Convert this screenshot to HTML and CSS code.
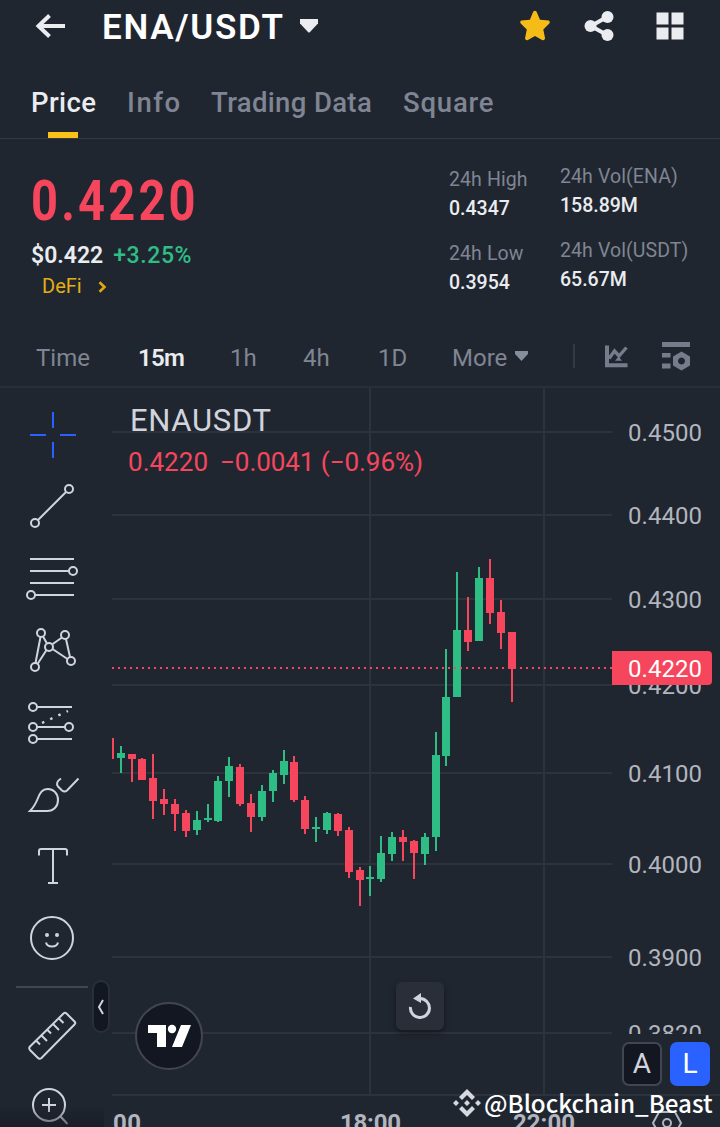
FILE: index.html
```html
<!doctype html>
<html lang="en">
  <head>
    <meta charset="UTF-8" />
    <meta name="viewport" content="width=device-width, initial-scale=1.0" />
    <title>ENA/USDT</title>
    <link rel="stylesheet" href="styles.css">
  </head>
  <body>
    <header class="header">
      <svg class="back" width="32" height="26" viewBox="0 0 32 26" fill="none" stroke="#eaecef" stroke-width="4">
        <path d="M31 13H4M15.500 2.500 4.500 13 15.500 23.500" />
      </svg>
      <h1 class="pair">ENA/USDT</h1>
      <svg class="caret" width="18" height="14" viewBox="0 0 18 14" fill="#eaecef">
        <path d="M0 0h18v4.500L10 13q-1 1-2 0L0 4.500z" />
      </svg>
      <div class="actions">
        <svg width="32" height="32" viewBox="0 0 32 32" fill="#f5bc18">
          <path d="M14.300 1.500q1.700-1.500 3.200 0l3.500 8.300 8.800.8q1.800 1 .7 2.600l-6.200 6.200 1.800 9.200q-.7 2-2.600 1.600L16 26l-7.500 4.200q-2 .3-2.500-1.600l1.800-9.200-6.300-6.200q-1-1.700.8-2.600l8.600-.8z" />
        </svg>
        <svg width="30" height="32" viewBox="0 0 30 32" fill="#eaecef">
          <path d="M7 16 23 7M7 16l16 9" stroke="#eaecef" stroke-width="4" />
          <circle cx="6.500" cy="16" r="6" />
          <circle cx="23.500" cy="7" r="6" />
          <circle cx="23.500" cy="25" r="6" />
        </svg>
        <svg width="28" height="28" viewBox="0 0 28 28" fill="#eaecef">
          <path d="M.500.500h12v12h-12zM15.500.500h12v12h-12zM.500 15.500h12v12h-12zM15.500 15.500h12v12h-12z" />
        </svg>
      </div>
    </header>

    <nav class="tabs">
      <a class="tab active">Price</a>
      <a class="tab info">Info</a>
      <a class="tab trading">Trading Data</a>
      <a class="tab square">Square</a>
    </nav>

    <section class="ticker">
      <div class="last">
        <div class="price">0.4220</div>
        <div class="fiat">
          <span>$0.422</span>
          <span class="change">+3.25%</span>
        </div>
        <div class="tag">
          DeFi
          <svg width="9" height="12" viewBox="0 0 9 12" fill="none" stroke="#e0a80e" stroke-width="2.600">
            <path d="M1.500 1.200 6.500 6l-5 4.800" />
          </svg>
        </div>
      </div>
      <dl class="stats">
        <dt>24h High</dt>
        <dd>0.4347</dd>
        <dt>24h Low</dt>
        <dd>0.3954</dd>
      </dl>
      <dl class="stats volume">
        <dt>24h Vol(ENA)</dt>
        <dd>158.89M</dd>
        <dt>24h Vol(USDT)</dt>
        <dd>65.67M</dd>
      </dl>
    </section>

    <div class="intervals">
      <span>Time</span>
      <span class="selected">15m</span>
      <span>1h</span>
      <span>4h</span>
      <span>1D</span>
      <span>More</span>
      <svg width="13" height="10" viewBox="0 0 13 10" fill="#848e9c">
        <path d="M0 0h13v3L6.500 10 0 3z" />
      </svg>
      <i class="divider"></i>
      <svg width="23" height="23" viewBox="0 0 23 23" fill="none" stroke="#767d8a">
        <path d="M2 .500v19.800h20.500" stroke-width="4" />
        <path d="M4 13.500 9.500 6l4.500 5 7.500-8.500" stroke-width="3.400" />
        <path d="m13.500 11.500 3.500 4.300h-7z" fill="#767d8a" stroke="none" />
      </svg>
      <svg width="29" height="30" viewBox="0 0 29 30" fill="#767d8a">
        <path d="M0 1h28v5H0zM0 12h8.500v4.500H0zM0 22.500h8.500v5H0z" />
        <path fill-rule="evenodd" d="m19.500 10.500 8.500 5v9l-8.500 5-8.500-5v-9zM19.500 16.500a3.500 3.500 0 1 0 .01 0z" />
      </svg>
    </div>

    <main class="chart">
      <aside class="tools">
        <svg viewBox="0 0 104 739" width="104" height="739" fill="none" stroke="#d1d4dc" stroke-width="2">
          <!-- crosshair -->
          <path d="M53 24v16M53 54v16M30 47h16M60 47h16" stroke="#2962ff" />
          <!-- trend line -->
          <circle cx="69" cy="101" r="4" />
          <circle cx="35" cy="135" r="4" />
          <path d="m38 132 28-28" />
          <!-- fib retracement -->
          <path d="M30 171h44M30 183h39M30 195h44M35 207h39" />
          <circle cx="73" cy="183" r="4" />
          <circle cx="31" cy="207" r="4" />
          <!-- xabcd pattern -->
          <circle cx="41" cy="245" r="4" />
          <circle cx="65" cy="247" r="4" />
          <circle cx="49" cy="259" r="4" />
          <circle cx="71" cy="273" r="4" />
          <circle cx="35" cy="279" r="4" />
          <path d="m40.500 249-5 26M43 248.500l4 7M52 256.500l10-7M66 251l4 18M52.500 261l15 10M46.500 262l-9 14" />
          <!-- long position -->
          <path d="M37 319h35M37 339h28M37 351h35" />
          <path d="m42 335 26-12" stroke-width="2.400" stroke-dasharray="2.500 6.500" />
          <circle cx="33" cy="319" r="4" />
          <circle cx="33" cy="339" r="4" />
          <circle cx="69" cy="339" r="4" />
          <circle cx="33" cy="351" r="4" />
          <!-- brush -->
          <path d="M30 423h17c7 0 11-5 11-11 0-7-5-11-10-11-6 0-8 4-10 9-2 5-4 9-8 13z" />
          <path d="M61 390.500c-4 2.500-5 5.500-3 8l4 4q2.500 2 5 0L78.500 390.500" />
          <!-- text -->
          <path d="M39 467.500V463q0-2 2-2h24q2 0 2 2v4.500M53 461v34M48 495h10" />
          <!-- emoji -->
          <circle cx="52" cy="550" r="21" />
          <path d="M46 554.500q1 4 6 4t6-4" />
          <g fill="#d1d4dc" stroke="none">
            <circle cx="47" cy="547" r="2" />
            <circle cx="57" cy="547" r="2" />
          </g>
          <!-- ruler -->
          <path d="M16 599h72" stroke="#434651" />
          <path d="m63.500 625.500q1.500-1.500 3 0l8 8q1.500 1.500 0 3L41.500 670q-2 1.500-3.500 0l-8-8q-1.500-2 0-3.500zM36 652.500l4 4M41 647l6 6M47 641.500l4 4M53 636l6 6M58.500 630l5 5" />
          <!-- zoom in -->
          <circle cx="49" cy="717" r="16" />
          <path d="M42 717h14M49 710v14M60.500 728.500l7 7.500" />
        </svg>
        <div class="fade"></div>
        <div class="collapse">
          <svg width="8" height="16" viewBox="0 0 8 16" fill="none" stroke="#d1d4dc" stroke-width="2">
            <path d="M6 1 2 8l4 7" />
          </svg>
        </div>
      </aside>

      <svg class="plot" width="616" height="739" viewBox="104 388 616 739">
        <g id="grid" fill="#2d333d"></g>
        <g id="candles"></g>
        <path d="M112 668h500" stroke="#f6465d" stroke-width="2" stroke-dasharray="2 4" />
        <g id="prices" class="axis"></g>
        <path d="M612 651h96q4 0 4 4v26q0 4-4 4h-96z" fill="#f6465d" />
        <text x="628" y="677" textLength="74" class="current">0.4220</text>
        <g class="axis hours">
          <text x="113" y="1131" textLength="28">00</text>
          <text x="340" y="1131" textLength="61">18:00</text>
          <text x="513" y="1131" textLength="62">22:00</text>
        </g>
        <g fill="none" stroke="#b2b5be" stroke-width="2">
          <path d="m653 1123 6-11h16l6 11-6 11h-16z" />
          <circle cx="667" cy="1123" r="4" />
        </g>
        <text x="130" y="431" textLength="141" class="symbol">ENAUSDT</text>
        <text x="128" y="471" textLength="80" class="delta">0.4220</text>
        <text x="220" y="471" textLength="203" class="delta">−0.0041 (−0.96%)</text>
      </svg>

      <div class="tv">
        <svg width="44" height="24" viewBox="0 0 44 24" fill="#fff">
          <path d="M1 1h18v22h-9V9H1zM34 1h10l-9 22H25z" />
          <circle cx="25" cy="5" r="4.200" />
        </svg>
      </div>

      <button class="reset">
        <svg width="24" height="26" viewBox="0 0 24 26" fill="none" stroke="#d1d4dc" stroke-width="3">
          <path d="M2.500 14A9.500 9.500 0 1 0 12 5.500" />
          <path d="M13 0v10L5 5.500z" fill="#d1d4dc" stroke="none" />
        </svg>
      </button>

      <div class="scales">
        <button class="scale">A</button>
        <button class="scale on">L</button>
      </div>

      <div class="watermark">
        <svg width="28" height="28" viewBox="0 0 28 28" fill="#d5d8df">
          <path d="M14 0 22 8l-3 3-5-5-5 5-3-3zM14 28l8-8-3-3-5 5-5-5-3 3zM14 11l3 3-3 3-3-3zM3 11l3 3-3 3-3-3zM25 11l3 3-3 3-3-3z" />
        </svg>
        <span>@Blockchain_Beast</span>
      </div>
    </main>

    <script src="chart.js"></script>
  </body>
</html>
```
FILE: styles.css
```css
* {
  box-sizing: border-box;
}

body {
  margin: 0;
  height: 1127px;
  overflow: hidden;
  background-color: #202630;
  color: #eaecef;
  font-family: Roboto, sans-serif;
}

svg {
  display: block;
  flex: none;
}

button {
  padding: 0;
  border: none;
  font-family: Roboto, sans-serif;
}

.header {
  display: flex;
  align-items: center;
  height: 52px;
  padding: 0 36px 0 34px;
}

.pair {
  margin: 4px 0 0 36px;
  width: 182px;
  font-size: 35px;
  font-weight: 600;
  line-height: 48px;
  letter-spacing: 1.7px;
  color: #fff;
}

.caret {
  margin-left: 16px;
}

.actions {
  display: flex;
  align-items: center;
  margin-left: auto;
}

.actions svg:nth-child(2) {
  margin: 0 42px 0 33px;
}

.tabs {
  display: grid;
  grid-template-columns: 96px 84px 192px 1fr;
  height: 87px;
  padding: 30px 0 0 31px;
  border-bottom: 1px solid #343a44;
}

.tab {
  position: relative;
  font-size: 27.5px;
  font-weight: 500;
  line-height: 42px;
  letter-spacing: 0.8px;
  white-space: nowrap;
  color: #7f8592;
}

.tab.active {
  letter-spacing: 0.4px;
  color: #eaecef;
}

.tab.info {
  letter-spacing: 1.6px;
}

.tab.trading {
  letter-spacing: 0.35px;
}

.tab.active::after {
  content: "";
  position: absolute;
  bottom: 0;
  left: 17px;
  width: 30px;
  height: 6px;
  background-color: #fcc118;
}

.ticker {
  display: grid;
  grid-template-columns: 418px 111px 1fr;
  height: 188px;
  padding: 27px 0 0 31px;
}

.price {
  height: 74px;
  color: #f6465d;
  font-size: 56px;
  font-weight: 700;
  line-height: 70px;
  letter-spacing: 3.8px;
  transform: scaleX(0.84);
  transform-origin: left;
}

.fiat {
  display: flex;
  gap: 10px;
  font-size: 23px;
  font-weight: 600;
  line-height: 32px;
}

.change {
  color: #2ebd85;
  font-weight: 500;
  letter-spacing: 0.6px;
}

.tag {
  display: flex;
  align-items: center;
  gap: 16px;
  padding-left: 11px;
  color: #e3af14;
  font-size: 20px;
  line-height: 29px;
}

.stats {
  margin: 1px 0 0;
}

.stats.volume {
  margin-top: -2px;
}

.stats dt {
  font-size: 19.5px;
  line-height: 26px;
  letter-spacing: 0.1px;
  white-space: nowrap;
  color: #7f8592;
}

.stats dd {
  margin: 0 0 17px;
  font-size: 19.5px;
  font-weight: 500;
  line-height: 31px;
}

.intervals {
  display: grid;
  grid-template-columns: 102px 92px 73px 75px 74px 63px 58px 32px 57px 1fr;
  align-items: center;
  height: 61px;
  padding: 0 0 1px 36px;
  border-bottom: 2px solid #292f39;
  color: #7f8592;
  font-size: 24px;
}

.intervals span {
  padding-top: 4px;
}

.intervals .selected {
  color: #eaecef;
  font-weight: 600;
  letter-spacing: -0.7px;
}

.divider {
  width: 2px;
  height: 24px;
  background-color: #343a45;
}

.chart {
  position: relative;
  display: flex;
  height: 739px;
}

.tools {
  position: relative;
  width: 104px;
}

.fade {
  position: absolute;
  bottom: 0;
  left: 0;
  width: 104px;
  height: 22px;
  background-image: linear-gradient(rgba(19, 23, 34, 0), rgba(19, 23, 34, 0.6));
}

.collapse {
  position: absolute;
  top: 592px;
  left: 92px;
  display: flex;
  align-items: center;
  justify-content: center;
  width: 18px;
  height: 53px;
  border: 2px solid #2a2e39;
  border-radius: 9px;
  background-color: #131722;
  z-index: 1;
}

.axis {
  fill: #b2b5be;
  font-size: 24px;
}

.hours {
  font-weight: 700;
}

.current {
  fill: #fff;
  font-size: 24px;
}

.symbol {
  fill: #d1d4dc;
  font-size: 31px;
}

.delta {
  fill: #f6465d;
  font-size: 26px;
}

.tv {
  position: absolute;
  top: 614px;
  left: 135px;
  display: flex;
  align-items: center;
  justify-content: center;
  width: 68px;
  height: 68px;
  border: 2px solid #434651;
  border-radius: 50%;
  background-color: #131722;
}

.reset {
  position: absolute;
  top: 594px;
  left: 396px;
  display: flex;
  align-items: center;
  justify-content: center;
  width: 48px;
  height: 48px;
  border-radius: 6px;
  background-color: #2a2e39;
  box-shadow: 0 3px 6px rgba(0, 0, 0, 0.4);
}

.scales {
  position: absolute;
  top: 654px;
  left: 622px;
  display: flex;
  gap: 8px;
}

.scale {
  width: 40px;
  height: 44px;
  border: 2px solid #434651;
  border-radius: 7px;
  background-color: #131722;
  color: #d1d4dc;
  font-size: 28px;
  line-height: 40px;
}

.scale.on {
  border-color: #2962ff;
  background-color: #2962ff;
  color: #fff;
}

.watermark {
  position: absolute;
  top: 701px;
  left: 453px;
  display: flex;
  align-items: center;
  gap: 3px;
  color: #fff;
  font-family: "Noto Sans CJK SC", sans-serif;
  font-size: 24.2px;
  font-weight: 500;
  line-height: 28px;
}
```
FILE: chart.js
```js
// x, high, low, body top, body bottom, rising
const candles = [
  [117, 746, 773, 753, 758, 1],
  [128, 754, 782, 754, 759, 0],
  [138, 758, 780, 759, 780, 0],
  [149, 754, 819, 778, 801, 0],
  [160, 789, 815, 799, 804, 0],
  [171, 799, 831, 804, 814, 0],
  [182, 810, 837, 813, 831, 0],
  [193, 811, 835, 820, 830, 1],
  [204, 804, 822, 818, 820, 1],
  [214, 776, 822, 781, 821, 1],
  [225, 757, 797, 766, 781, 1],
  [236, 764, 806, 767, 804, 0],
  [247, 794, 832, 803, 817, 0],
  [258, 785, 821, 791, 817, 1],
  [269, 770, 802, 773, 791, 1],
  [280, 750, 784, 761, 775, 1],
  [290, 756, 802, 762, 800, 0],
  [301, 796, 834, 800, 829, 0],
  [312, 817, 842, 827, 829, 1],
  [323, 812, 834, 813, 830, 1],
  [334, 813, 836, 814, 831, 0],
  [345, 827, 878, 830, 872, 0],
  [356, 867, 906, 870, 880, 0],
  [366, 866, 896, 877, 879, 1],
  [377, 836, 882, 853, 879, 1],
  [388, 832, 861, 837, 854, 1],
  [399, 830, 861, 837, 842, 0],
  [410, 840, 879, 841, 853, 0],
  [421, 833, 865, 837, 854, 1],
  [432, 732, 851, 755, 837, 1],
  [442, 649, 766, 697, 756, 1],
  [453, 572, 697, 630, 697, 1],
  [464, 597, 651, 630, 642, 0],
  [475, 567, 641, 578, 641, 1],
  [486, 559, 624, 578, 613, 0],
  [497, 600, 649, 612, 633, 0],
  [508, 632, 702, 632, 669, 0],
];

const levels = [
  ["0.4500", 431],
  ["0.4400", 514],
  ["0.4300", 598],
  ["0.4200", 684],
  ["0.4100", 772],
  ["0.4000", 863],
  ["0.3900", 956],
];

const svgNs = "http://www.w3.org/2000/svg";

function add(parent, name, attrs) {
  const el = document.createElementNS(svgNs, name);
  for (const key in attrs) el.setAttribute(key, attrs[key]);
  parent.appendChild(el);
  return el;
}

function rect(parent, x, y, width, height, fill) {
  const attrs = { x, y, width, height };
  if (fill) attrs.fill = fill;
  return add(parent, "rect", attrs);
}

const grid = document.getElementById("grid");
const prices = document.getElementById("prices");
const candleGroup = document.getElementById("candles");

levels.forEach(([label, y]) => {
  rect(grid, 112, y, 500, 2);
  const text = add(prices, "text", { x: 628, y: y + 10, textLength: 74 });
  text.textContent = label;
});
rect(grid, 112, 1032, 500, 2);
rect(grid, 112, 1094, 608, 2);
rect(grid, 369, 388, 2, 706);
rect(grid, 543, 388, 2, 706);

// lowest label is cut off above the scale buttons
const clip = add(prices, "clipPath", { id: "cut" });
rect(clip, 612, 1010, 108, 24);
add(prices, "text", {
  x: 628,
  y: 1042,
  textLength: 74,
  "clip-path": "url(#cut)",
}).textContent = "0.3820";

rect(candleGroup, 112, 738, 2, 21, "#f6465d");
candles.forEach(([x, high, low, top, bottom, rising]) => {
  const color = rising ? "#2ebd85" : "#f6465d";
  rect(candleGroup, x + 3, high, 2, low - high, color);
  rect(candleGroup, x, top, 8, bottom - top, color);
});
```
